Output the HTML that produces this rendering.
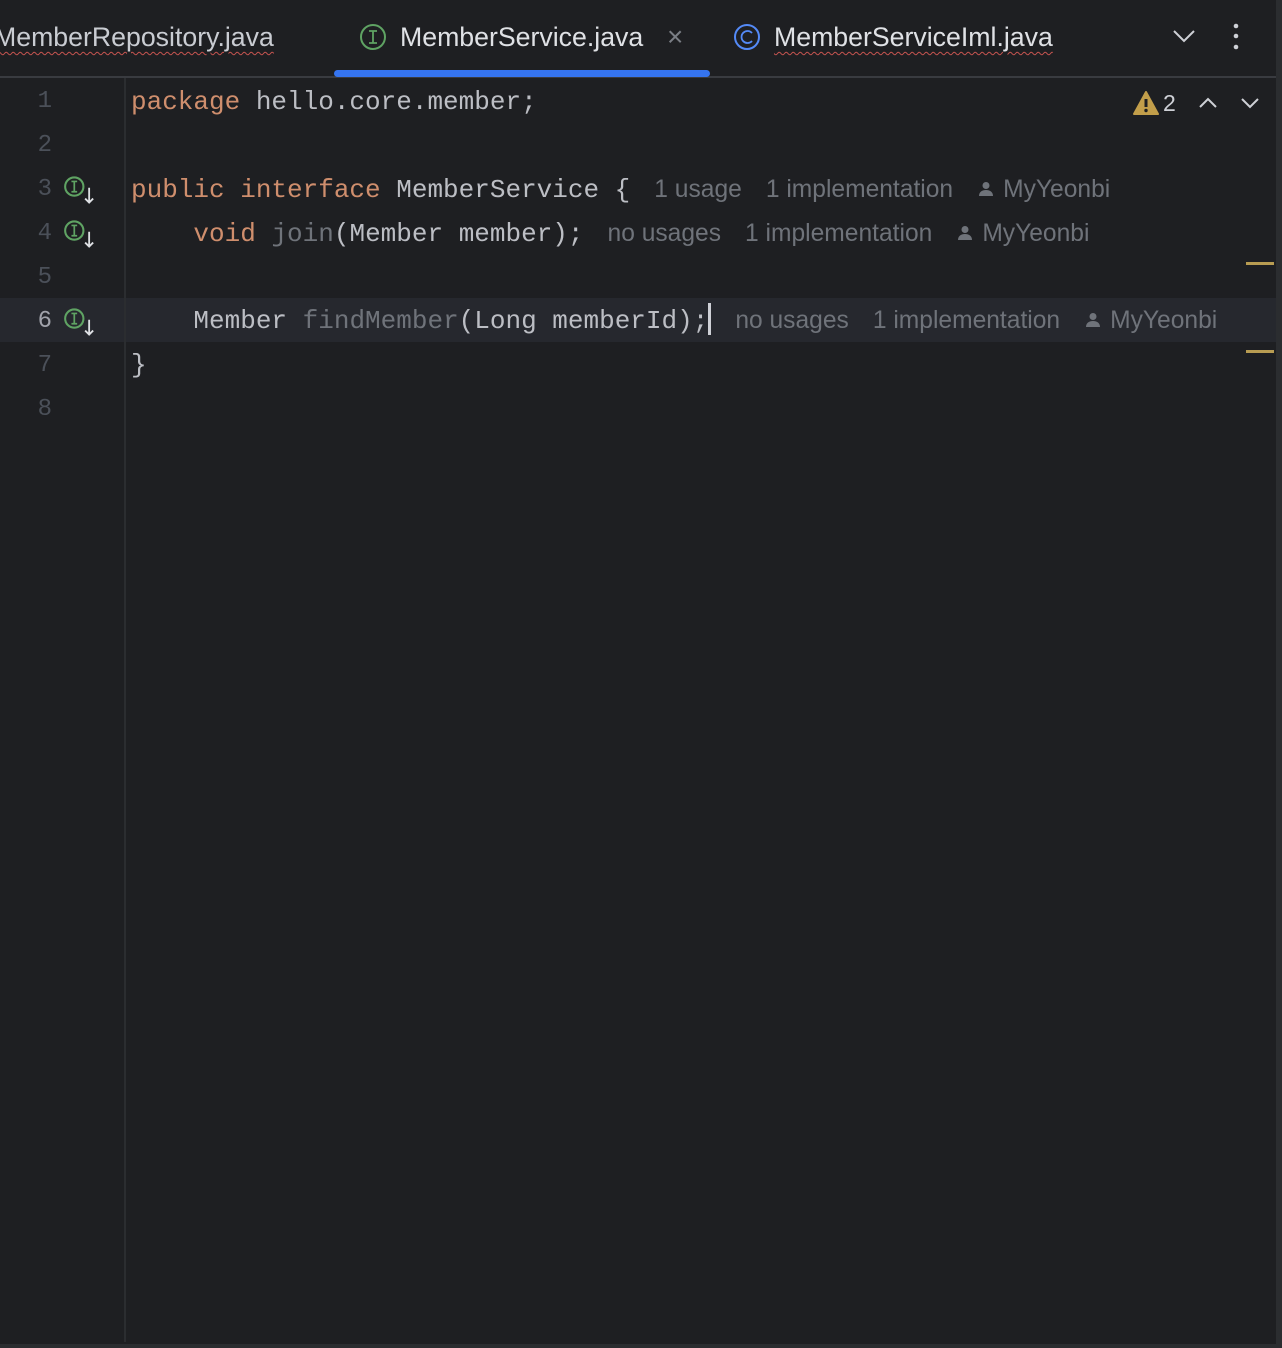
<!DOCTYPE html>
<html><head><style>
body{margin:0;width:1282px;height:1348px;background:#1e1f22;position:relative;overflow:hidden;font-family:"Liberation Sans",sans-serif}
.abs{position:absolute}
.tab{position:absolute;top:20px;font-size:26.7px;color:#dfe1e5;white-space:nowrap;line-height:34px}
.wavy{text-decoration:underline wavy #c75450;text-decoration-thickness:1px;text-underline-offset:5px}
.ln{position:absolute;left:0;width:52px;text-align:right;font-family:"Liberation Mono",monospace;font-size:24px;color:#4b5059;line-height:44px}
.code{position:absolute;left:131px;font-family:"Liberation Mono",monospace;font-size:26px;color:#bcbec4;white-space:pre;line-height:44px}
.kw{color:#cf8e6d}.dim{color:#6f737a}
.hint{font-family:"Liberation Sans",sans-serif;font-size:24.6px;color:#6f737a;margin-left:24px}
.gi{position:absolute;left:64px;width:32px;height:32px}
.pi{display:inline-block;width:18px;height:18px;margin-right:8px;vertical-align:-1px}
</style></head><body>
<div class="tab wavy" style="left:-6px;color:#c9ccd2">MemberRepository.java</div>
<svg class="abs" style="left:359px;top:23px" width="30" height="30"><circle cx="14" cy="14" r="12" fill="none" stroke="#5fa363" stroke-width="2"/><path d="M10 8h8M14 8v12M10 20h8" stroke="#5fa363" stroke-width="1.8"/></svg>
<div class="tab" style="left:400px">MemberService.java</div>
<div class="tab" style="left:667px;color:#7a7e85;font-size:28px">×</div>
<svg class="abs" style="left:733px;top:23px" width="30" height="30"><circle cx="14" cy="14" r="12" fill="none" stroke="#548af7" stroke-width="2"/><path d="M19 10a6 6 0 1 0 0 8" fill="none" stroke="#548af7" stroke-width="1.8"/></svg>
<div class="tab wavy" style="left:774px">MemberServiceIml.java</div>
<svg class="abs" style="left:1170px;top:26px" width="28" height="20"><path d="M4 5l10 10 10-10" fill="none" stroke="#ced0d6" stroke-width="2"/></svg>
<svg class="abs" style="left:1228px;top:22px" width="16" height="30"><circle cx="8" cy="4" r="2.3" fill="#ced0d6"/><circle cx="8" cy="14" r="2.3" fill="#ced0d6"/><circle cx="8" cy="25" r="2.3" fill="#ced0d6"/></svg>
<div class="abs" style="left:0;top:76px;width:1276px;height:2px;background:#393b40"></div>
<div class="abs" style="left:334px;top:70px;width:376px;height:7px;border-radius:4px;background:#3574f0"></div>
<div class="abs" style="left:0;top:298px;width:1276px;height:44px;background:#26282e"></div>
<div class="abs" style="left:124px;top:78px;width:2px;height:1264px;background:#2b2d30"></div>
<div class="abs" style="left:1276px;top:0;width:6px;height:1348px;background:#2b2d30"></div>
<div class="abs" style="left:0;top:1344px;width:1282px;height:4px;background:#2b2d30"></div>
<div class="abs" style="left:1246px;top:262px;width:28px;height:3px;background:#b89c52"></div>
<div class="abs" style="left:1246px;top:350px;width:28px;height:3px;background:#b89c52"></div>
<svg class="abs" style="left:1133px;top:91px" width="26" height="24"><path d="M13 1L25 23H1z" fill="#c29e4a" stroke="#c29e4a" stroke-linejoin="round" stroke-width="2"/><path d="M13 8v8" stroke="#1e1f22" stroke-width="3"/><circle cx="13" cy="19.5" r="1.7" fill="#1e1f22"/></svg>
<div class="abs" style="left:1163px;top:90px;font-size:23px;color:#ced0d6">2</div>
<svg class="abs" style="left:1198px;top:95px" width="20" height="16"><path d="M2 12l8-8 8 8" fill="none" stroke="#ced0d6" stroke-width="2"/></svg>
<svg class="abs" style="left:1240px;top:95px" width="20" height="16"><path d="M2 4l8 8 8-8" fill="none" stroke="#ced0d6" stroke-width="2"/></svg>
<div class="ln" style="top:80px">1</div>
<div class="ln" style="top:124px">2</div>
<div class="ln" style="top:168px">3</div>
<div class="ln" style="top:212px">4</div>
<div class="ln" style="top:256px">5</div>
<div class="ln" style="top:300px;color:#a1a3ab">6</div>
<div class="ln" style="top:344px">7</div>
<div class="ln" style="top:388px">8</div>
<svg class="gi" style="top:174px" viewBox="0 0 28 28"><circle cx="9" cy="11" r="8" fill="none" stroke="#5fa363" stroke-width="1.8"/><path d="M6.5 6.5h5M9 6.5v9M6.5 15.5h5" stroke="#5fa363" stroke-width="1.5"/><path d="M22 12v13M18.5 21.5l3.5 3.5 3.5-3.5" fill="none" stroke="#dfe1e5" stroke-width="1.6"/></svg>
<svg class="gi" style="top:218px" viewBox="0 0 28 28"><circle cx="9" cy="11" r="8" fill="none" stroke="#5fa363" stroke-width="1.8"/><path d="M6.5 6.5h5M9 6.5v9M6.5 15.5h5" stroke="#5fa363" stroke-width="1.5"/><path d="M22 12v13M18.5 21.5l3.5 3.5 3.5-3.5" fill="none" stroke="#dfe1e5" stroke-width="1.6"/></svg>
<svg class="gi" style="top:306px" viewBox="0 0 28 28"><circle cx="9" cy="11" r="8" fill="none" stroke="#5fa363" stroke-width="1.8"/><path d="M6.5 6.5h5M9 6.5v9M6.5 15.5h5" stroke="#5fa363" stroke-width="1.5"/><path d="M22 12v13M18.5 21.5l3.5 3.5 3.5-3.5" fill="none" stroke="#dfe1e5" stroke-width="1.6"/></svg>
<div class="code" style="top:80px"><span class="kw">package</span> hello.core.member;</div>
<div class="code" style="top:168px"><span class="kw">public interface</span> MemberService {<span class="hint">1 usage</span><span class="hint">1 implementation</span><span class="hint"><svg class="pi" viewBox="0 0 18 18"><circle cx="9" cy="5.5" r="3.5" fill="#6f737a"/><path d="M2 16c0-4 3-6 7-6s7 2 7 6z" fill="#6f737a"/></svg>MyYeonbi</span></div>
<div class="code" style="top:212px">    <span class="kw">void</span> <span class="dim">join</span>(Member member);<span class="hint">no usages</span><span class="hint">1 implementation</span><span class="hint"><svg class="pi" viewBox="0 0 18 18"><circle cx="9" cy="5.5" r="3.5" fill="#6f737a"/><path d="M2 16c0-4 3-6 7-6s7 2 7 6z" fill="#6f737a"/></svg>MyYeonbi</span></div>
<div class="code" style="top:299px">    Member <span class="dim">findMember</span>(Long memberId);<span style="display:inline-block;width:3px;height:32px;background:#ced0d6;vertical-align:-7px"></span><span class="hint">no usages</span><span class="hint">1 implementation</span><span class="hint"><svg class="pi" viewBox="0 0 18 18"><circle cx="9" cy="5.5" r="3.5" fill="#6f737a"/><path d="M2 16c0-4 3-6 7-6s7 2 7 6z" fill="#6f737a"/></svg>MyYeonbi</span></div>
<div class="code" style="top:343px">}</div>
</body></html>
